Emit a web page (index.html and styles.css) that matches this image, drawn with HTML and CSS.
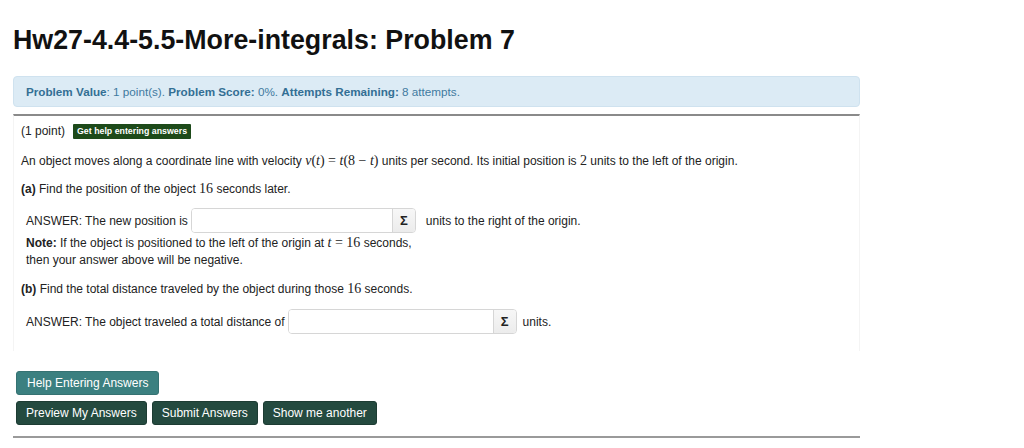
FILE: index.html
```html
<!DOCTYPE html>
<html>
<head>
<meta charset="utf-8">
<link rel="stylesheet" href="styles.css">
</head>
<body>
<div class="page">
  <h1 class="title">Hw27-4.4-5.5-More-integrals: Problem 7</h1>
  <div class="alert">
    <b>Problem Value</b>: 1 point(s). <b>Problem Score:</b> 0%. <b>Attempts Remaining:</b> 8 attempts.
  </div>
  <div class="problem">
    <div class="pointrow">
      <span>(1 point)</span>
      <span class="helpbtn">Get help entering answers</span>
    </div>
    <p class="para p1">An object moves along a coordinate line with velocity <span class="m"><i>v</i>(<i>t</i>) = <i>t</i>(8 − <i>t</i>)</span> units per second. Its initial position is <span class="m">2</span> units to the left of the origin.</p>
    <p class="para p2"><b>(a)</b> Find the position of the object <span class="m">16</span> seconds later.</p>
    <div class="answer a1">
      <span>ANSWER: The new position is</span>
      <span class="inputgroup w1"><span class="field"></span><span class="sigma">Σ</span></span>
      <span class="after">units to the right of the origin.</span>
    </div>
    <p class="note"><b>Note:</b> If the object is positioned to the left of the origin at <span class="m"><i>t</i> = 16</span> seconds,<br>then your answer above will be negative.</p>
    <p class="para p3"><b>(b)</b> Find the total distance traveled by the object during those <span class="m">16</span> seconds.</p>
    <div class="answer a2">
      <span>ANSWER: The object traveled a total distance of</span>
      <span class="inputgroup w2"><span class="field"></span><span class="sigma">Σ</span></span>
      <span class="after short">units.</span>
    </div>
  </div>
  <div class="buttons">
    <div class="row"><span class="btn teal">Help Entering Answers</span></div>
    <div class="row">
      <span class="btn dark">Preview My Answers</span>
      <span class="btn dark">Submit Answers</span>
      <span class="btn dark">Show me another</span>
    </div>
  </div>
  <div class="bottomline"></div>
</div>
</body>
</html>
```
FILE: styles.css
```css
html, body {
  margin: 0;
  padding: 0;
  background: #ffffff;
}
body {
  font-family: "Liberation Sans", Arial, sans-serif;
  color: #222222;
}
.page {
  width: 847px;
  margin-left: 13px;
  padding-top: 25px;
}
.title {
  margin: 0;
  font-size: 26.8px;
  line-height: 30px;
  font-weight: bold;
  color: #111111;
}
.alert {
  margin-top: 21px;
  height: 31px;
  box-sizing: border-box;
  background: #dcebf5;
  border: 1px solid #cfe2ef;
  border-radius: 4px;
  padding: 0 12px;
  font-size: 11.7px;
  line-height: 29px;
  color: #3f7aa0;
}
.alert b {
  color: #336f94;
}
.problem {
  margin-top: 7px;
  border-top: 2px solid #8a8a8a;
  padding: 7px 7px 17px 7px;
  font-size: 12px;
  color: #222222;
  border-left: 1px solid #f4f4f4;
  border-right: 1px solid #f4f4f4;
}
.pointrow {
  display: flex;
  align-items: center;
  gap: 8px;
  height: 16px;
}
.helpbtn {
  background: #1d4a1a;
  color: #ffffff;
  font-size: 8.8px;
  font-weight: bold;
  padding: 0 4px;
  height: 15px;
  line-height: 15px;
  border-radius: 1px;
}
.para {
  margin: 0;
  line-height: 16px;
}
.p1 { margin-top: 14px; }
.p2 { margin-top: 12px; }
.p3 { margin-top: 12px; }
.m {
  font-family: "Liberation Serif", "Times New Roman", serif;
  font-size: 14px;
}
.answer {
  display: flex;
  align-items: center;
  gap: 3px;
  padding-left: 5px;
  height: 25px;
}
.a1 { margin-top: 11px; }
.a2 { margin-top: 12px; }
.after {
  margin-left: 7px;
}
.after.short {
  margin-left: 3px;
}
.inputgroup {
  display: flex;
  height: 25px;
  box-sizing: border-box;
  border: 1px solid #d6d6d6;
  border-radius: 4px;
  overflow: hidden;
}
.w1 { width: 225px; }
.w2 { width: 229px; }
.field {
  flex: 1;
  background: #ffffff;
}
.sigma {
  width: 22px;
  background: linear-gradient(#f7f7f7, #ececec);
  border-left: 1px solid #d6d6d6;
  text-align: center;
  font-weight: bold;
  font-size: 13px;
  line-height: 23px;
  color: #222;
}
.note {
  margin: 1px 0 0 5px;
  line-height: 17px;
}
.buttons {
  margin-top: 20px;
  display: flex;
  flex-direction: column;
  gap: 6px;
  padding-left: 3px;
}
.row {
  display: flex;
  gap: 5px;
}
.btn {
  display: inline-block;
  height: 24px;
  padding: 0 9px;
  font-size: 12px;
  color: #ffffff;
  border-radius: 3px;
  box-sizing: border-box;
  line-height: 22px;
}
.teal {
  background: #3b8080;
  border: 1px solid #357272;
  padding: 0 10px;
}
.dark {
  background: #244a3f;
  border: 1px solid #1d3c33;
}
.bottomline {
  margin-top: 11px;
  border-top: 2px solid #9a9a9a;
}
```
